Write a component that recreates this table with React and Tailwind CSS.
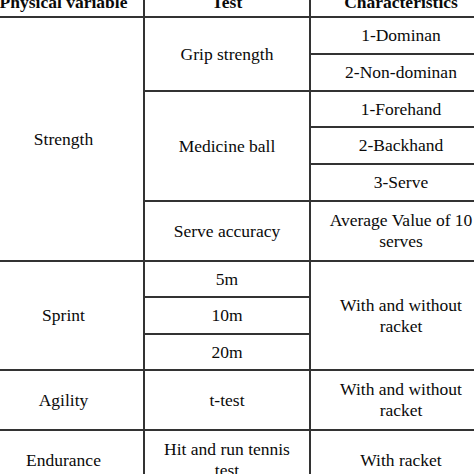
import React from "react";

const cell =
  "flex items-center justify-center text-center border-r-2 border-b-2 border-[#333333] px-3";

export default function App() {
  return (
    <div
      className="w-[474px] h-[474px] overflow-hidden bg-white text-[#0a0a0a]"
      style={{ fontFamily: '"Liberation Serif", "Times New Roman", serif' }}
    >
      <div className="ml-[-16px] mt-[-12px] grid grid-cols-[161px_166px_182px] grid-rows-[30px_37px_37px_36px_37px_37px_60px_36px_37px_36px_60px_60px] text-[17.5px] leading-[21px]">
        <div className={`${cell} font-bold`}>Physical variable</div>
        <div className={`${cell} font-bold`}>Test</div>
        <div className={`${cell} font-bold`}>Characteristics</div>

        <div className={`${cell} row-span-6`}>Strength</div>
        <div className={`${cell} row-span-2`}>Grip strength</div>
        <div className={cell}>1-Dominan</div>
        <div className={cell}>2-Non-dominan</div>
        <div className={`${cell} row-span-3`}>Medicine ball</div>
        <div className={cell}>1-Forehand</div>
        <div className={cell}>2-Backhand</div>
        <div className={cell}>3-Serve</div>
        <div className={cell}>Serve accuracy</div>
        <div className={cell}>Average Value of 10 serves</div>

        <div className={`${cell} row-span-3`}>Sprint</div>
        <div className={cell}>5m</div>
        <div className={`${cell} row-span-3`}>With and without racket</div>
        <div className={cell}>10m</div>
        <div className={cell}>20m</div>

        <div className={cell}>Agility</div>
        <div className={cell}>t-test</div>
        <div className={cell}>With and without racket</div>

        <div className={cell}>Endurance</div>
        <div className={cell}>Hit and run tennis test</div>
        <div className={cell}>With racket</div>
      </div>
    </div>
  );
}
